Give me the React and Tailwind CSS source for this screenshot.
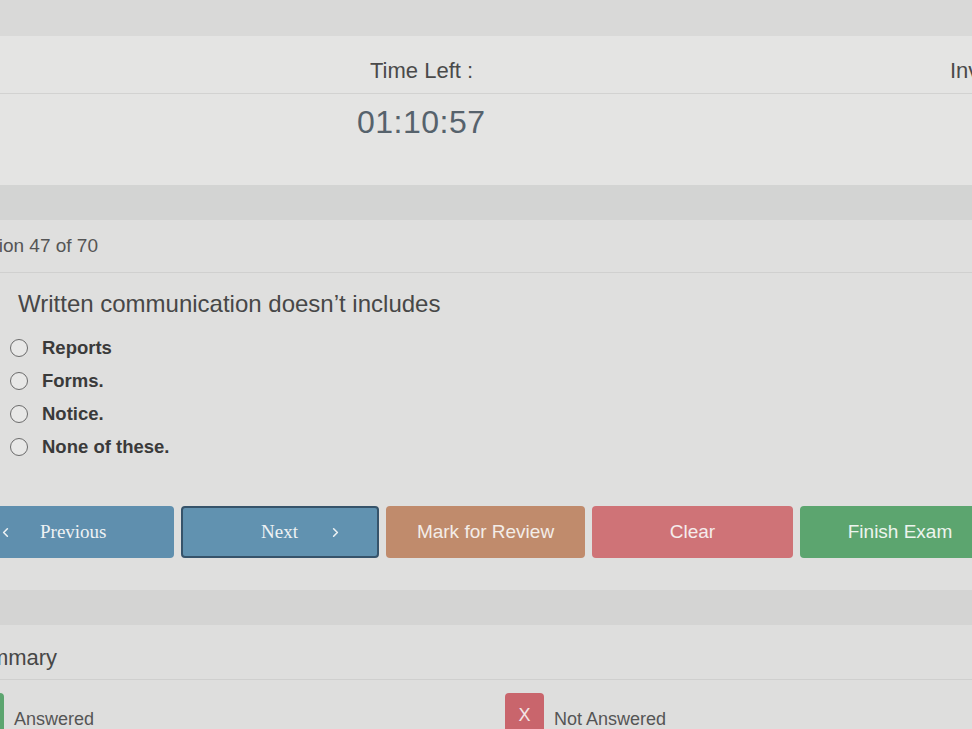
import { ChevronLeft, ChevronRight } from 'lucide-react';

const options = ['Reports', 'Forms.', 'Notice.', 'None of these.'];

const App = () => {
  return (
    <div className="w-[972px] h-[729px] overflow-hidden bg-[#d6d6d5] font-['Liberation_Sans',Arial,sans-serif]">
      {/* top strip */}
      <div className="h-[36px] bg-[#d9d9d8]" />

      {/* timer card */}
      <div className="h-[149px] bg-[#e4e4e3]">
        <div className="h-[58px] flex items-center pt-[12px] border-b border-[#d2d2d1] whitespace-nowrap">
          <span className="ml-[370px] w-[580px] shrink-0 text-[22px] text-[#4a4a4a]">Time Left :</span>
          <span className="text-[22px] text-[#4a4a4a]">Invigilator</span>
        </div>
        <div className="h-[56px] flex items-center">
          <span className="ml-[357px] text-[32px] text-[#56626c] tracking-[0.5px]">01:10:57</span>
        </div>
      </div>

      <div className="h-[35px] bg-[#d3d4d3]" />

      {/* question card */}
      <div className="h-[370px] bg-[#dfdfde]">
        <div className="h-[53px] flex items-center border-b border-[#d0d0cf] whitespace-nowrap">
          <span className="-ml-[52px] text-[19px] text-[#555]">Question 47 of 70</span>
        </div>
        <div className="pt-[13px] pl-[18px] text-[24px] text-[#474747]">
          Written communication doesn’t includes
        </div>
        <div className="mt-[9px] flex flex-col">
          {options.map((o) => (
            <label key={o} className="h-[33px] flex items-center gap-[14px] pl-[10px]">
              <span className="w-[18px] h-[18px] rounded-full border-[1.5px] border-[#6b6b6b] bg-[#e8e8e7]" />
              <span className="text-[18.5px] font-bold text-[#3a3a3a]">{o}</span>
            </label>
          ))}
        </div>

        <div className="mt-[43px] -ml-[24px] flex gap-[7px] whitespace-nowrap">
          <button className="w-[198px] h-[52px] shrink-0 rounded-[4px] bg-[#5f8fae] text-[#eef2f4] flex items-center pl-[22px] font-['Liberation_Serif','Times_New_Roman',serif] text-[19px]">
            <ChevronLeft size={15} strokeWidth={2.5} />
            <span className="ml-[27px]">Previous</span>
          </button>
          <button className="w-[198px] h-[52px] shrink-0 rounded-[4px] bg-[#6192b0] border-2 border-[#36536a] text-[#eef2f4] flex items-center justify-end pr-[34px] font-['Liberation_Serif','Times_New_Roman',serif] text-[19px]">
            <span>Next</span>
            <ChevronRight size={15} strokeWidth={2.5} className="ml-[30px]" />
          </button>
          <button className="w-[199px] h-[52px] shrink-0 rounded-[4px] bg-[#c08b6c] text-[#f3ede8] text-[19px]">
            Mark for Review
          </button>
          <button className="w-[201px] h-[52px] shrink-0 rounded-[4px] bg-[#cf7377] text-[#f5ecec] text-[19px]">
            Clear
          </button>
          <button className="w-[200px] h-[52px] shrink-0 rounded-[4px] bg-[#5ca56f] text-[#edf4ee] text-[19px]">
            Finish Exam
          </button>
        </div>
      </div>

      <div className="h-[35px] bg-[#d4d4d3]" />

      {/* summary card */}
      <div className="h-[104px] bg-[#dededd]">
        <div className="h-[55px] flex items-center pt-[10px] border-b border-[#cfcfce] whitespace-nowrap">
          <span className="-ml-[37px] text-[22px] text-[#474747]">Summary</span>
        </div>
        <div className="mt-[13px] flex items-start whitespace-nowrap">
          <span className="-ml-[36px] w-[40px] h-[44px] shrink-0 rounded-[4px] bg-[#5ca56f]" />
          <span className="ml-[10px] mt-[13px] text-[18px] text-[#555]">Answered</span>
          <span className="ml-[411px] w-[39px] h-[44px] shrink-0 rounded-[4px] bg-[#c9656c] text-[#f3e6e6] text-[18px] flex items-center justify-center">X</span>
          <span className="ml-[10px] mt-[13px] text-[18px] text-[#555]">Not Answered</span>
        </div>
      </div>
    </div>
  );
};

export default App;
